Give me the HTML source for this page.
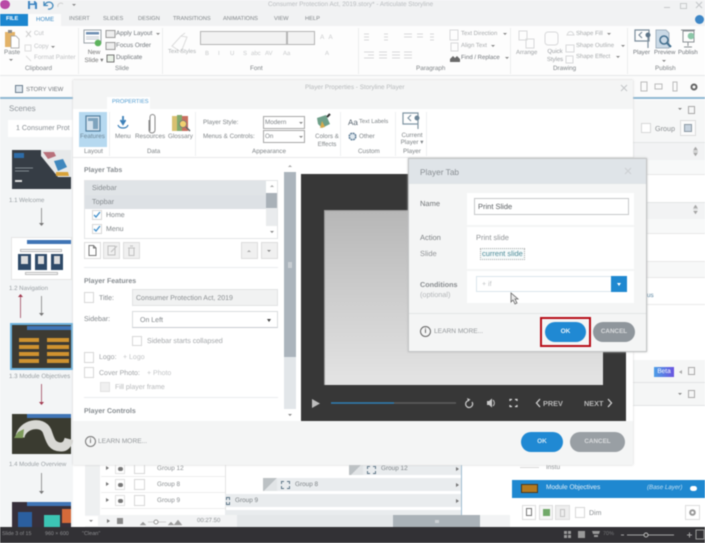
<!DOCTYPE html>
<html><head><meta charset="utf-8"><style>
html,body{margin:0;padding:0;width:705px;height:543px;overflow:hidden;background:#fff}
#r{position:relative;width:705px;height:543px;overflow:hidden;background:#fff;font-family:"Liberation Sans",sans-serif;color:#8b8f92;filter:blur(.5px);text-rendering:geometricPrecision}
#r div{position:absolute;box-sizing:border-box}
.t{white-space:nowrap;line-height:1}
.rb{font-size:6.300px}
.dk{color:#7f8487}
.lt{color:#a8abad}
svg{position:absolute;overflow:visible}
.cb{background:#fff;border:1px solid #d8d8d8}
.sq{background:#fafafa;border:1px solid #ddd}
.ar{width:0;height:0;border-left:3px solid #777;border-top:2px solid transparent;border-bottom:2px solid transparent}
.ad{width:0;height:0;border-top:2.500px solid #888;border-left:2px solid transparent;border-right:2px solid transparent}
.au{width:0;height:0;border-bottom:2.500px solid #aaa;border-left:2px solid transparent;border-right:2px solid transparent}
</style></head><body><div id="r">
<!-- top -->
<div style="left:0;top:0;width:705px;height:26px;background:#f1f2f3"></div>
<div style="left:0;top:0;width:10px;height:9px;border-radius:5px;background:#b94aa6"></div>
<svg style="left:27px;top:0" width="50" height="12" viewBox="0 0 50 12"><path d="M1 1h7l2 2v6H1z" fill="#3f86c2"/><rect x="3" y="1" width="4" height="2.500" fill="#e2ecf4"/><rect x="3" y="5" width="5" height="4" fill="#e2ecf4"/><path d="M18 5a4 3.500 0 1 1 3 4M17 1.500v4h4" fill="none" stroke="#4489bc" stroke-width="1.300"/><path d="M31 7a3 3 0 0 1 5-3" fill="none" stroke="#d0d0d0"/></svg>
<div class="ad" style="left:72px;top:4px"></div>
<div class="t" style="left:268px;top:2px;font-size:6.400px;color:#b9bcbf">Consumer Protection Act, 2019.story* - Articulate Storyline</div>
<div style="left:664px;top:7px;width:6px;height:1px;background:#c6c8ca"></div>
<div style="left:680px;top:3px;width:7px;height:6px;border:1px solid #c8cacc"></div>
<svg style="left:696px;top:2px" width="8" height="8" viewBox="0 0 8 8"><path d="M0 0l6 6M6 0L0 6" stroke="#c4c6c8"/></svg>
<div style="left:695px;top:15px;width:9px;height:9px;border-radius:5px;background:#3d86c6"></div>
<div style="left:0;top:14px;width:28px;height:12px;background:#1c86cf"></div>
<div class="t" style="left:6px;top:17px;font-size:5.700px;font-weight:bold;color:#fff">FILE</div>
<div style="left:28px;top:14px;width:33px;height:13px;background:#fcfcfc"></div>
<div class="t" style="left:36px;top:17px;font-size:6px;color:#3889c4">HOME</div>
<div class="t" style="left:69px;top:17px;font-size:5.700px;color:#7f8487">INSERT</div>
<div class="t" style="left:103px;top:17px;font-size:5.700px;color:#7f8487">SLIDES</div>
<div class="t" style="left:138px;top:17px;font-size:5.700px;color:#7f8487">DESIGN</div>
<div class="t" style="left:173px;top:17px;font-size:5.600px;color:#7f8487">TRANSITIONS</div>
<div class="t" style="left:223px;top:17px;font-size:5.700px;color:#7f8487">ANIMATIONS</div>
<div class="t" style="left:274px;top:17px;font-size:5.700px;color:#7f8487">VIEW</div>
<div class="t" style="left:305px;top:17px;font-size:5.700px;color:#7f8487">HELP</div>
<!-- ribbon -->
<div style="left:0;top:26px;width:705px;height:50px;background:#fdfdfd;border-bottom:1px solid #e6e8e9"></div>
<div style="left:78px;top:28px;width:1px;height:46px;background:#eceded"></div>
<div style="left:162px;top:28px;width:1px;height:46px;background:#eceded"></div>
<div style="left:510px;top:28px;width:1px;height:46px;background:#eceded"></div>
<div style="left:627px;top:28px;width:1px;height:46px;background:#eceded"></div>
<div style="left:358px;top:28px;width:1px;height:46px;background:#eceded"></div>
<svg style="left:0;top:26px" width="705" height="50" viewBox="0 0 705 50"><rect x="5" y="6" width="10" height="15" fill="#e3b368"/><rect x="8" y="4" width="4" height="3" fill="#8b8b8b"/><path d="M11 10h5l3 3v9h-8z" fill="#fff" stroke="#9a9a9a" stroke-width=".7"/>
<path d="M26 5l5 6M31 5l-5 6" stroke="#cfcfcf"/><rect x="25" y="19" width="6" height="6" fill="none" stroke="#ddd"/><path d="M26 30l5 5" stroke="#ddd"/>
<rect x="84" y="4" width="17" height="13" fill="#fff" stroke="#9aa2a8"/><rect x="86" y="6" width="13" height="2.500" fill="#6f8fb3"/><path d="M86 11h13M86 13h13" stroke="#c3cad0"/><circle cx="98" cy="17" r="3.300" fill="#5db35d"/>
<rect x="106" y="4.500" width="9" height="7" fill="#eee" stroke="#999"/><rect x="106" y="16.500" width="9" height="7" fill="#eee" stroke="#999"/><rect x="107" y="29" width="7" height="7" fill="#e9f1e6" stroke="#777"/>
<path d="M172 20l9-10 6 1-6 15zM181 10l4-3" fill="none" stroke="#dcdcdc"/>
<g fill="none" stroke="#d8d9da"><path d="M364 8h5M364 11h5M364 14h5M384 8h4M384 11h4M384 14h4M404 8h8M404 11h8M417 8h6M417 11h6M430 8h4M430 11h4M430 14h4M364 26h10M368 29h6M364 32h10M379 26h8M379 29h8M379 32h8M392 26h8M392 29h8M392 32h8M404 26h8M404 29h8M404 32h8"/><rect x="450" y="4" width="8" height="10"/><rect x="451" y="17" width="7" height="8"/><rect x="519" y="5" width="8" height="9"/><rect x="526" y="13" width="8" height="9"/><rect x="545" y="6" width="13" height="13" rx="3"/><path d="M568 7a3 3 0 0 1 5 0l1 2h-7z"/><rect x="566" y="19" width="8" height="7"/><rect x="566" y="30" width="7" height="7"/></g>
<path d="M450 33l3-3 2 2 2-2 3 3v3h-10z" fill="#6a6a6a"/>
<path d="M635 4h14v11h-14zM642 6l-3 3 3 3M648 10v12" fill="none" stroke="#7b8d9c" stroke-width="1.200"/><circle cx="648" cy="9" r="2.500" fill="#5c7488"/>
<path d="M656 4h10l3 3v15h-13z" fill="#cad9e6" stroke="#a4b3c0"/><circle cx="664" cy="14" r="4" fill="none" stroke="#44708f" stroke-width="1.500"/><path d="M667 17l4 4" stroke="#44708f" stroke-width="2"/>
<path d="M681 4h14M683 5h11v11h-11zM688 16v4M684 21h8" fill="none" stroke="#8c9195"/><circle cx="691" cy="10" r="3.300" fill="#8cc7a8"/></svg>
<div class="t rb" style="left:4px;top:50px;color:#7f8487">Paste</div>
<div class="ad" style="left:9px;top:59px"></div>
<div class="t rb" style="left:34px;top:31px;color:#c0c2c4">Cut</div>
<div class="t rb" style="left:34px;top:44px;color:#c0c2c4">Copy</div>
<div class="ad" style="left:51px;top:46px"></div>
<div class="t rb" style="left:34px;top:55px;color:#c0c2c4">Format Painter</div>
<div class="t rb dk" style="left:25px;top:66px">Clipboard</div>
<div class="t rb" style="left:82px;top:49px;width:24px;color:#777;text-align:center;line-height:7.500px">New<br>Slide ▾</div>
<div class="t rb" style="left:116px;top:31px;color:#70757a">Apply Layout</div>
<div class="ad" style="left:156px;top:33px"></div>
<div class="t rb" style="left:116px;top:43px;color:#70757a">Focus Order</div>
<div class="t rb" style="left:116px;top:55px;color:#70757a">Duplicate</div>
<div class="t rb dk" style="left:115px;top:66px">Slide</div>
<div class="t" style="left:168px;top:50px;font-size:5.800px;color:#aeb1b3">Text Styles</div>
<div style="left:200px;top:31px;width:87px;height:14px;background:#f2f2f2;border:1px solid #b5b5b5"></div>
<div style="left:287px;top:31px;width:28px;height:14px;background:#f2f2f2;border:1px solid #b5b5b5"></div>
<div class="t" style="left:205px;top:51px;font-size:6px;color:#c8cacb">B</div><div class="t" style="left:218px;top:51px;font-size:6px;color:#c8cacb">I</div><div class="t" style="left:230px;top:51px;font-size:6px;color:#c8cacb">U</div><div class="t" style="left:243px;top:51px;font-size:6px;color:#c8cacb">S</div><div class="t" style="left:251px;top:51px;font-size:6px;color:#c8cacb">abc</div><div class="t" style="left:265px;top:51px;font-size:6px;color:#c8cacb">AV</div><div class="t" style="left:283px;top:51px;font-size:6px;color:#c8cacb">Aa</div><div class="t" style="left:325px;top:51px;font-size:6px;color:#c8cacb">A</div>
<div class="t" style="left:320px;top:35px;font-size:6.500px;color:#cfd0d1;word-spacing:3px">A A</div>
<div class="t rb dk" style="left:250px;top:66px">Font</div>
<div class="t" style="left:461px;top:31px;font-size:6px;color:#a8abad">Text Direction</div>
<div class="t" style="left:461px;top:43px;font-size:6px;color:#a8abad">Align Text</div>
<div class="t" style="left:461px;top:55px;font-size:6px;color:#70757a">Find / Replace</div>
<div class="ad" style="left:503px;top:33px"></div><div class="ad" style="left:491px;top:45px"></div><div class="ad" style="left:505px;top:57px"></div>
<div class="t rb dk" style="left:416px;top:66px">Paragraph</div>
<div class="t" style="left:516px;top:50px;font-size:6px;color:#9b9ea1">Arrange</div>
<div class="t" style="left:543px;top:49px;width:24px;font-size:6px;color:#9b9ea1;text-align:center;line-height:7.500px">Quick<br>Styles</div>
<div class="t" style="left:576px;top:31px;font-size:6px;color:#a8abad">Shape Fill</div>
<div class="t" style="left:576px;top:43px;font-size:6px;color:#a8abad">Shape Outline</div>
<div class="t" style="left:576px;top:54px;font-size:6px;color:#a8abad">Shape Effect</div>
<div class="ad" style="left:607px;top:33px"></div><div class="ad" style="left:621px;top:45px"></div><div class="ad" style="left:616px;top:56px"></div>
<div class="t rb dk" style="left:553px;top:66px">Drawing</div>
<div class="t" style="left:633px;top:50px;font-size:6px;color:#70757a">Player</div>
<div class="t" style="left:654px;top:50px;font-size:6px;color:#70757a">Preview</div>
<div class="t" style="left:678px;top:50px;font-size:6px;color:#70757a">Publish</div>
<div class="ad" style="left:662px;top:60px"></div>
<div class="t rb dk" style="left:655px;top:66px">Publish</div>
<!-- story view row -->
<div style="left:0;top:76px;width:705px;height:23px;background:#fbfbfb"></div>
<div style="left:0;top:97px;width:73px;height:2px;background:#8fb7d2"></div>
<div style="left:633px;top:97px;width:72px;height:2px;background:#8fb7d2"></div>
<div style="left:15px;top:85px;width:8px;height:8px;border:1px solid #6d7f90;background:#dfe7ee"></div>
<div class="t" style="left:26px;top:87px;font-size:6px;color:#70757a">STORY VIEW</div>
<svg style="left:630px;top:80px" width="75" height="14" viewBox="0 0 75 14"><g fill="none" stroke="#bbb"><path d="M1 2v9"/><rect x="11" y="2" width="6" height="9"/><rect x="25" y="4" width="7" height="5"/><rect x="43" y="2" width="4" height="9"/></g><circle cx="64" cy="7" r="2.500" fill="none" stroke="#666" stroke-width="2"/></svg>
<!-- scenes panel -->
<div style="left:0;top:99px;width:73px;height:429px;background:#f3f5f6"></div>
<div class="t" style="left:9px;top:105px;font-size:8px;color:#8e9499">Scenes</div>
<div style="left:8px;top:120px;width:65px;height:17px;background:#fff"></div>
<div class="t" style="left:16px;top:125px;font-size:7.100px;color:#8a9095">1 Consumer Prot</div>
<!-- thumbs -->
<div style="left:12px;top:150px;width:59px;height:39px;background:#363d45;overflow:hidden"></div>
<div style="left:14px;top:153px;width:10px;height:5px;background:#2d6ca8"></div>
<svg style="left:12px;top:150px" width="59" height="39" viewBox="0 0 59 39"><path d="M29 0H59V27H46L29 6z" fill="#e7e9ea"/><path d="M42 11l9-2 4 8-9 4z" fill="#3f87bd"/><path d="M31 2h11l2 4-8 3z" fill="#b8707a"/><path d="M44 22l12 0 1 4-13 0z" fill="#d8a23a"/><path d="M3 18h18M3 21h14" stroke="#9aa1a8" stroke-width=".8"/><rect x="3" y="30" width="7" height="2" fill="#ddd"/></svg>
<div class="t" style="left:9px;top:198px;font-size:6.100px;color:#9aa0a4">1.1 Welcome</div>
<svg style="left:38px;top:208px" width="7" height="110" viewBox="0 0 7 110"><path d="M3.500 0v15M3.500 88v19" stroke="#999"/><path d="M1 15h5l-2.500 3zM1 105h5l-2.500 3z" fill="#777"/></svg>
<div style="left:11px;top:237px;width:61px;height:43px;background:#fff;border:1px solid #e6e6e6"></div>
<div style="left:27px;top:240px;width:44px;height:4px;background:#3f74b5"></div>
<div style="left:18px;top:254px;width:13px;height:16px;background:#2f4a68"></div><div style="left:21px;top:256px;width:7px;height:8px;background:#ddd"></div>
<div style="left:35px;top:254px;width:12px;height:16px;background:#2f4a68"></div><div style="left:38px;top:256px;width:6px;height:8px;background:#ddd"></div>
<div style="left:51px;top:254px;width:12px;height:16px;background:#2f4a68"></div><div style="left:54px;top:256px;width:6px;height:8px;background:#ddd"></div>
<div style="left:20px;top:249px;width:42px;height:3px;border:1px solid #bbb"></div>
<div style="left:25px;top:272px;width:33px;height:3px;border:1px solid #bbb"></div>
<div class="t" style="left:9px;top:286px;font-size:6.100px;color:#9aa0a4">1.2 Navigation</div>
<svg style="left:17px;top:294px" width="7" height="25" viewBox="0 0 7 25"><path d="M3.500 3v21" stroke="#b06a7c"/><path d="M1 3h5l-2.500-3z" fill="#a33a50"/></svg>
<div style="left:10px;top:323px;width:63px;height:47px;background:#3c3a33;border:2px solid #6db3de"></div>
<div style="left:27px;top:326px;width:44px;height:4px;background:#3f74b5"></div>
<div style="left:19px;top:338px;width:20px;height:4px;background:#cf9230"></div>
<div style="left:47px;top:338px;width:22px;height:4px;background:#cf9230"></div>
<div style="left:19px;top:345px;width:20px;height:4px;background:#cf9230"></div>
<div style="left:47px;top:345px;width:22px;height:4px;background:#cf9230"></div>
<div style="left:19px;top:352px;width:20px;height:4px;background:#cf9230"></div>
<div style="left:47px;top:352px;width:22px;height:4px;background:#cf9230"></div>
<div style="left:19px;top:359px;width:20px;height:4px;background:#cf9230"></div>
<div style="left:47px;top:359px;width:22px;height:4px;background:#cf9230"></div>
<div class="t" style="left:9px;top:374px;font-size:6.200px;color:#9aa0a4">1.3 Module Objectives</div>
<svg style="left:38px;top:384px" width="7" height="22" viewBox="0 0 7 22"><path d="M3.500 0v19" stroke="#b06a7c"/><path d="M1 18h5l-2.500 3z" fill="#a33a50"/></svg>
<div style="left:12px;top:414px;width:59px;height:40px;background:#3a3b30;overflow:hidden"></div>
<div style="left:27px;top:414px;width:44px;height:4px;background:#3f74b5"></div>
<svg style="left:12px;top:414px" width="59" height="40" viewBox="0 0 59 40"><path d="M8 23c2-13 22-17 27-6 3 8 4 16 14 16 5 0 7-4 8-8" fill="none" stroke="#d8d8d4" stroke-width="9"/><path d="M2 24l9 0 1-9-6 3z" fill="#7d9a5a"/></svg>
<div class="t" style="left:9px;top:462px;font-size:6.100px;color:#9aa0a4">1.4 Module Overview</div>
<svg style="left:38px;top:473px" width="7" height="22" viewBox="0 0 7 22"><path d="M3.500 0v19" stroke="#999"/><path d="M1 18h5l-2.500 3z" fill="#777"/></svg>
<div style="left:12px;top:502px;width:59px;height:26px;background:#37303a"></div>
<div style="left:27px;top:502px;width:44px;height:4px;background:#3f74b5"></div>
<div style="left:18px;top:512px;width:14px;height:16px;background:#2b5f9f"></div>
<div style="left:44px;top:515px;width:16px;height:13px;background:#3cc4b4"></div>
<div style="left:62px;top:509px;width:9px;height:14px;background:#d56a3a"></div>
<!-- right panel -->
<div style="left:633px;top:99px;width:72px;height:429px;background:#fff"></div>
<div style="left:633px;top:100px;width:72px;height:42px;background:#f6f7f7"></div>
<div style="left:633px;top:142px;width:72px;height:1px;background:#e3e5e6"></div>
<div class="ad" style="left:678px;top:108px"></div>
<div style="left:688px;top:106px;width:7px;height:8px;border:1px solid #a9a9a9"></div>
<div class="cb" style="left:641px;top:123px;width:10px;height:10px"></div>
<div class="t" style="left:655px;top:125px;font-size:7.200px;color:#8b8f92">Group</div>
<div style="left:680px;top:120px;width:16px;height:16px;background:#fbfbfb;border:1px solid #ddd"></div>
<div style="left:684px;top:124px;width:8px;height:8px;background:#c6d2de;border:1px solid #8d9aa5"></div>
<div style="left:633px;top:143px;width:72px;height:17px;background:#f2f3f4"></div>
<div style="left:633px;top:160px;width:72px;height:15px;background:#f8f9f9;border-bottom:1px solid #e8e8e8"></div>
<div style="left:633px;top:202px;width:72px;height:17px;background:#f2f3f4;border-top:1px solid #e3e5e6"></div>
<div style="left:633px;top:219px;width:72px;height:15px;background:#f8f9f9;border-bottom:1px solid #e8e8e8"></div>
<div style="left:633px;top:261px;width:72px;height:17px;background:#f7f8f8;border-top:1px solid #e8e8e8;border-bottom:1px solid #e8e8e8"></div>
<svg style="left:693px;top:147px" width="6" height="70" viewBox="0 0 6 70"><path d="M0 4h5M0 5h5M2.500 0l-2 3h4zM2.500 9l-2-3h4z" fill="#a5a5a5" stroke="#a5a5a5" stroke-width=".4"/><path d="M0 62h5M2.500 58l-2 3h4zM2.500 67l-2-3h4z" fill="#a5a5a5" stroke="#a5a5a5" stroke-width=".4"/></svg>
<div class="t" style="left:647px;top:293px;font-size:6.300px;color:#56829f">us</div>
<div style="left:633px;top:304px;width:72px;height:1px;background:#eaeaea"></div>
<div style="left:633px;top:360px;width:72px;height:23px;background:#f5f6f6;border-bottom:1px solid #e2e4e5"></div>
<div style="left:633px;top:383px;width:72px;height:23px;background:#f5f6f6;border-bottom:1px solid #e2e4e5"></div>
<div class="t" style="left:654px;top:367px;width:20px;height:10px;background:linear-gradient(90deg,#4c9ee6,#6a55e0);color:#fff;font-size:6.500px;text-align:center;line-height:10px">Beta</div>
<div style="left:679px;top:370px;width:0;height:0;border-right:3px solid #aaa;border-top:2px solid transparent;border-bottom:2px solid transparent"></div>
<div style="left:688px;top:367px;width:7px;height:8px;border:1px solid #a9a9a9"></div>
<div class="ad" style="left:678px;top:393px"></div>
<div style="left:688px;top:390px;width:7px;height:8px;border:1px solid #a9a9a9"></div>
<!-- bottom right -->
<div style="left:510px;top:465px;width:195px;height:63px;background:#fff"></div>
<div style="left:520px;top:467px;width:19px;height:1px;background:#d8d8d8"></div>
<div class="t" style="left:546px;top:465px;font-size:6.500px;color:#8b8f92">Instu</div>
<div style="left:512px;top:480px;width:193px;height:18px;background:#1f88d0"></div>
<div style="left:521px;top:484px;width:17px;height:9px;background:#b57a20;border:1px solid #4a3a20"></div>
<div class="t" style="left:546px;top:485px;font-size:6.600px;color:#e8f2f9">Module Objectives</div>
<div class="t" style="left:647px;top:485px;font-size:6.200px;font-style:italic;color:#c4e0f2">(Base Layer)</div>
<div style="left:690px;top:486px;width:7px;height:5px;border-radius:4px;background:#fff"></div>
<div style="left:522px;top:505px;width:14px;height:15px;background:#fff;border:1px solid #ddd"></div>
<div style="left:526px;top:508px;width:6px;height:8px;border:1px solid #777"></div>
<div style="left:539px;top:505px;width:14px;height:15px;background:#f5f5f5;border:1px solid #ddd"></div>
<div style="left:543px;top:509px;width:7px;height:7px;background:#70a868"></div>
<div style="left:555px;top:505px;width:15px;height:15px;background:#eee;border:1px solid #ddd"></div>
<div style="left:560px;top:509px;width:5px;height:8px;border:1px solid #c4c4c4"></div>
<div class="cb" style="left:575px;top:507px;width:10px;height:11px"></div>
<div class="t" style="left:589px;top:510px;font-size:7px;color:#8b8f92">Dim</div>
<div style="left:685px;top:505px;width:15px;height:15px;background:#fff;border:1px solid #ddd"></div>
<svg style="left:689px;top:509px" width="8" height="8" viewBox="0 0 8 8"><circle cx="3.500" cy="3.500" r="2.300" fill="none" stroke="#999" stroke-width="2"/></svg>
<!-- timeline -->
<div style="left:73px;top:465px;width:437px;height:63px;background:#fff"></div>
<div style="left:85px;top:465px;width:15px;height:63px;background:#eef0f1"></div>
<div style="left:225px;top:465px;width:1px;height:49px;background:#e4e4e4"></div>
<div style="left:101px;top:476px;width:124px;height:1px;background:#eee"></div><div style="left:101px;top:492px;width:124px;height:1px;background:#eee"></div><div style="left:101px;top:508px;width:124px;height:1px;background:#eee"></div>
<div class="ar" style="left:106px;top:466px"></div><div class="ar" style="left:106px;top:482px"></div><div class="ar" style="left:106px;top:498px"></div>
<div style="left:115px;top:463px;width:10px;height:11px;background:#fff;border:1px solid #e0e0e0"></div><div style="left:118px;top:467px;width:5px;height:4px;background:#777;border-radius:3px"></div>
<div style="left:115px;top:479px;width:10px;height:11px;background:#fff;border:1px solid #e0e0e0"></div><div style="left:118px;top:483px;width:5px;height:4px;background:#777;border-radius:3px"></div>
<div style="left:115px;top:495px;width:10px;height:11px;background:#fff;border:1px solid #e0e0e0"></div><div style="left:118px;top:499px;width:5px;height:4px;background:#777;border-radius:3px"></div>
<div class="cb" style="left:134px;top:463px;width:11px;height:11px"></div><div class="cb" style="left:134px;top:479px;width:11px;height:11px"></div><div class="cb" style="left:134px;top:495px;width:11px;height:11px"></div>
<div class="t" style="left:157px;top:466px;font-size:6.400px;color:#8b8f92">Group 12</div>
<div class="t" style="left:157px;top:482px;font-size:6.400px;color:#8b8f92">Group 8</div>
<div class="t" style="left:157px;top:498px;font-size:6.400px;color:#8b8f92">Group 9</div>
<div style="left:349px;top:465px;width:112px;height:10px;background:#e9ecee"></div><div style="left:349px;top:465px;width:14px;height:10px;background:linear-gradient(135deg,#bcc1c4 50%,#e1e4e6 50%)"></div>
<div style="left:263px;top:478px;width:198px;height:13px;background:#e9ecee"></div><div style="left:263px;top:478px;width:14px;height:13px;background:linear-gradient(135deg,#bcc1c4 50%,#e1e4e6 50%)"></div>
<div style="left:225px;top:494px;width:236px;height:13px;background:#e9ecee"></div>
<div style="left:225px;top:510px;width:236px;height:5px;background:#e9ecee"></div>
<div style="left:367px;top:466px;width:9px;height:8px;border:1px dashed #5f7688"></div>
<div class="t" style="left:381px;top:466px;font-size:6.400px;color:#7f8487">Group 12</div>
<div style="left:281px;top:481px;width:9px;height:8px;border:1px dashed #5f7688"></div>
<div class="t" style="left:295px;top:482px;font-size:6.400px;color:#7f8487">Group 8</div>
<div style="left:226px;top:497px;width:4px;height:8px;border:1px dashed #5f7688"></div>
<div class="t" style="left:235px;top:498px;font-size:6.400px;color:#7f8487">Group 9</div>
<div style="left:461px;top:465px;width:1px;height:50px;background:#9ebdd1"></div>
<div class="ar" style="left:456px;top:467px"></div><div class="ar" style="left:456px;top:483px"></div><div class="ar" style="left:456px;top:499px"></div>
<div style="left:85px;top:515px;width:425px;height:13px;background:#f2f3f4"></div>
<div style="left:85px;top:516px;width:13px;height:10px;background:#fff"></div>
<div class="ad" style="left:89px;top:520px"></div>
<div style="left:393px;top:515px;width:87px;height:12px;background:#aab2b8"></div>
<div style="left:237px;top:515px;width:156px;height:12px;background:#e4e7e9"></div>
<div style="left:435px;top:520px;width:4px;height:3px;background:#ccd0d3"></div>
<div class="ar" style="left:107px;top:519px"></div>
<div style="left:117px;top:518px;width:6px;height:6px;background:#888"></div>
<svg style="left:140px;top:517px" width="70" height="9" viewBox="0 0 70 9"><path d="M0 8l3-3 3 3zM8 5h18M28 8l3-3 3 3 4-5 4 5z" fill="#9a9a9a" stroke="#aaa" stroke-width=".5"/><circle cx="16" cy="5" r="2" fill="#fff" stroke="#999"/></svg>
<div class="t" style="left:197px;top:518px;font-size:6px;color:#8b8f92">00:27.50</div>
<!-- status -->
<div style="left:0;top:527px;width:705px;height:16px;background:#323135"></div>
<div class="t" style="left:2px;top:532px;font-size:5.300px;color:#8d8e90">Slide 3 of 15</div>
<div class="t" style="left:45px;top:532px;font-size:5.300px;color:#8d8e90">960 × 600</div>
<div class="t" style="left:82px;top:532px;font-size:5.500px;color:#8d8e90">"Clean"</div>
<svg style="left:563px;top:529px" width="142" height="13" viewBox="0 0 142 13"><g fill="#999"><rect x="1" y="2" width="3" height="3"/><rect x="5" y="2" width="3" height="3"/><rect x="1" y="6" width="3" height="3"/><rect x="5" y="6" width="3" height="3"/><rect x="15" y="2" width="7" height="7"/><path d="M29 2h8l-1 3h-6zM31 6h4v2h-4z"/></g><path d="M58 6h3M64 6h47M124 6h5M126.500 3.500v5" stroke="#a5a5a5"/><circle cx="83" cy="6" r="2" fill="#333" stroke="#bbb"/><rect x="133" y="1" width="8" height="9" fill="none" stroke="#999"/></svg>
<div class="t" style="left:603px;top:532px;font-size:5.500px;color:#77787a">70%</div>
<!-- Player Properties dialog -->
<div style="left:73px;top:80px;width:560px;height:385px;background:#f4f5f5;box-shadow:0 0 2px #ccc"></div>
<div class="t" style="left:305px;top:85px;font-size:6.400px;color:#b6b9bb">Player Properties - Storyline Player</div>
<svg style="left:621px;top:85px" width="8" height="8" viewBox="0 0 8 8"><path d="M0 0l6 6M6 0L0 6" stroke="#c4c6c8"/></svg>
<div style="left:107px;top:97px;width:43px;height:13px;background:#fff"></div>
<div class="t" style="left:112px;top:100px;font-size:5.700px;color:#4f9bd0">PROPERTIES</div>
<div style="left:73px;top:109px;width:560px;height:49px;background:#fff;border-bottom:1px solid #e8e9ea"></div>
<div style="left:79px;top:112px;width:28px;height:35px;background:#b6d9f0"></div>
<svg style="left:79px;top:112px" width="340" height="36" viewBox="0 0 340 36"><rect x="7" y="4" width="14" height="15" fill="#d5e3ee" stroke="#53809f" stroke-width="1.200"/><rect x="14" y="6" width="5" height="11" fill="#7ea3bd"/><rect x="9" y="6" width="5" height="3" fill="#7ea3bd"/>
<path d="M44 4v7M41.500 8l2.500 4 2.500-4" stroke="#3c80b8" stroke-width="1.800" fill="none"/><path d="M39 13c1 4 9 4 10 0" stroke="#3c80b8" stroke-width="1.300" fill="none"/>
<path d="M70 8v10a3 3 0 0 0 6 0V5a2.500 2.500 0 0 0-5 0v14" fill="none" stroke="#888" stroke-width="1"/>
<rect x="93" y="4" width="5" height="15" fill="#d8c070"/><rect x="98" y="3" width="5" height="16" fill="#82a96e"/><rect x="103" y="4" width="6" height="15" fill="#c87060"/><circle cx="104" cy="12" r="3.500" fill="#f0d070" stroke="#777" stroke-width=".8"/><path d="M107 15l4 4" stroke="#666" stroke-width="1.500"/>
<path d="M238 6l9-3 4 9-8 4-4-4z" fill="#6fa08a"/><path d="M243 9l-2 7 5-1z" fill="#d9a94a"/><path d="M248 5l3-3" stroke="#333" stroke-width="2"/></svg>
<div class="t rb" style="left:80px;top:134px;color:#6f8797">Features</div>
<div class="t rb dk" style="left:115px;top:134px">Menu</div>
<div class="t rb dk" style="left:135px;top:134px">Resources</div>
<div class="t rb dk" style="left:168px;top:134px">Glossary</div>
<div class="t rb dk" style="left:84px;top:149px">Layout</div>
<div class="t rb dk" style="left:147px;top:149px">Data</div>
<div class="t rb dk" style="left:203px;top:120px">Player Style:</div>
<div class="t rb dk" style="left:203px;top:134px">Menus &amp; Controls:</div>
<div style="left:263px;top:116px;width:42px;height:13px;background:#fff;border:1px solid #a8a8a8"></div>
<div class="t rb dk" style="left:265px;top:120px">Modern</div>
<div class="ad" style="left:299px;top:122px"></div>
<div style="left:263px;top:130px;width:42px;height:13px;background:#fff;border:1px solid #a8a8a8"></div>
<div class="t rb dk" style="left:265px;top:134px">On</div>
<div class="ad" style="left:299px;top:136px"></div>
<div class="t dk" style="left:311px;top:133px;width:32px;font-size:6.200px;line-height:7.500px;text-align:center;white-space:normal">Colors &amp; Effects</div>
<div class="t rb dk" style="left:252px;top:149px">Appearance</div>
<div class="t" style="left:348px;top:119px;font-size:8px;color:#53606b">Aa</div>
<div class="t dk" style="left:359px;top:120px;font-size:5.800px">Text Labels</div>
<svg style="left:348px;top:132px" width="10" height="10" viewBox="0 0 10 10"><circle cx="4.500" cy="4.500" r="3.300" fill="#dfe8ef" stroke="#5f7d96" stroke-width="1.500" stroke-dasharray="2 .6"/></svg>
<div class="t rb dk" style="left:359px;top:134px">Other</div>
<div class="t rb dk" style="left:358px;top:149px">Custom</div>
<svg style="left:402px;top:112px" width="19" height="19" viewBox="0 0 19 19"><path d="M1 1h15v11H1zM9 3l-3 3 3 3M16 8v9" fill="none" stroke="#8195a3" stroke-width="1.200"/><circle cx="15" cy="6" r="2.500" fill="#6d8597"/></svg>
<div class="t rb dk" style="left:398px;top:131.500px;width:28px;line-height:7.500px;text-align:center">Current<br>Player ▾</div>
<div class="t rb dk" style="left:403px;top:149px">Player</div>
<div style="left:195px;top:112px;width:1px;height:44px;background:#eef0f1"></div><div style="left:109px;top:112px;width:1px;height:44px;background:#eef0f1"></div><div style="left:340px;top:112px;width:1px;height:44px;background:#eef0f1"></div><div style="left:395px;top:112px;width:1px;height:44px;background:#eef0f1"></div><div style="left:426px;top:112px;width:1px;height:44px;background:#eef0f1"></div>
<!-- content -->
<div style="left:73px;top:158px;width:560px;height:263px;background:#fff"></div>
<div class="t" style="left:84px;top:168px;font-size:6.900px;font-weight:bold;color:#888d91">Player Tabs</div>
<div style="left:84px;top:180px;width:194px;height:59px;background:#fff;border:1px solid #e4e6e7"></div>
<div style="left:85px;top:181px;width:181px;height:14px;background:#e0e4e7"></div>
<div style="left:85px;top:195px;width:181px;height:14px;background:#dde1e5"></div>
<div class="t" style="left:92px;top:184px;font-size:7.200px;color:#878c90">Sidebar</div>
<div class="t" style="left:92px;top:198px;font-size:7.200px;color:#878c90">Topbar</div>
<div class="cb" style="left:92px;top:210px;width:10px;height:10px"></div>
<div class="cb" style="left:92px;top:224px;width:10px;height:10px"></div>
<svg style="left:92px;top:210px" width="10" height="24" viewBox="0 0 10 24"><path d="M2 5l2 2 4-5M2 19l2 2 4-5" fill="none" stroke="#3f8fcb" stroke-width="1.300"/></svg>
<div class="t" style="left:106px;top:212px;font-size:7px;color:#7f8487">Home</div>
<div class="t" style="left:106px;top:226px;font-size:7px;color:#7f8487">Menu</div>
<div style="left:266px;top:181px;width:11px;height:57px;background:#e9ebed"></div>
<div style="left:266px;top:181px;width:11px;height:12px;background:#fff"></div>
<div style="left:266px;top:193px;width:11px;height:15px;background:#a9b1b8"></div>
<div style="left:266px;top:226px;width:11px;height:12px;background:#fff"></div>
<div class="au" style="left:270px;top:185px"></div>
<div class="ad" style="left:270px;top:231px"></div>
<div class="sq" style="left:84px;top:242px;width:17px;height:17px;background:#fff"></div>
<div class="sq" style="left:103px;top:242px;width:17px;height:17px;background:#f0f0f0"></div>
<div class="sq" style="left:123px;top:242px;width:17px;height:17px;background:#f0f0f0"></div>
<svg style="left:84px;top:242px" width="56" height="17" viewBox="0 0 56 17"><path d="M5 3.500h4.500L12 6v7.500H5zM9.500 3.500V6H12" fill="none" stroke="#777"/><path d="M24 4h7v9h-7zM27 10l6-6" fill="none" stroke="#c0c0c0"/><path d="M44 6h7M45 6v7.500h5V6M46 4h3" fill="none" stroke="#c0c0c0"/></svg>
<div class="sq" style="left:241px;top:242px;width:17px;height:17px;background:#f0f0f0"></div>
<div class="au" style="left:247px;top:250px"></div>
<div class="sq" style="left:261px;top:242px;width:17px;height:17px;background:#f0f0f0"></div>
<div class="ad" style="left:267px;top:250px"></div>
<div style="left:84px;top:267px;width:194px;height:1px;background:#ebedee"></div>
<div class="t" style="left:84px;top:278px;font-size:7px;font-weight:bold;color:#888d91">Player Features</div>
<div class="cb" style="left:84px;top:292px;width:10px;height:11px"></div>
<div class="t" style="left:99px;top:295px;font-size:7px;color:#808589">Title:</div>
<div style="left:132px;top:289px;width:146px;height:17px;background:#f1f2f2;border:1px solid #e2e3e4"></div>
<div class="t" style="left:136px;top:295px;font-size:7px;color:#8a8e91">Consumer Protection Act, 2019</div>
<div class="t" style="left:84px;top:316px;font-size:7px;color:#808589">Sidebar:</div>
<div style="left:132px;top:311px;width:146px;height:17px;background:#fff;border:1px solid #dadcde;border-bottom-color:#c8ccd0"></div>
<div class="t" style="left:140px;top:317px;font-size:7px;color:#808589">On Left</div>
<div style="left:267px;top:319px;width:0;height:0;border-top:3px solid #444;border-left:2.500px solid transparent;border-right:2.500px solid transparent"></div>
<div class="cb" style="left:132px;top:336px;width:10px;height:10px"></div>
<div class="t" style="left:147px;top:338px;font-size:7.100px;color:#a3a6a9">Sidebar starts collapsed</div>
<div class="cb" style="left:84px;top:352px;width:10px;height:11px"></div>
<div class="t" style="left:99px;top:354px;font-size:7px;color:#a0a3a6">Logo:</div>
<div class="t" style="left:123px;top:354px;font-size:7px;color:#c3c5c7">+ Logo</div>
<div class="cb" style="left:84px;top:367px;width:10px;height:11px"></div>
<div class="t" style="left:99px;top:370px;font-size:7px;color:#a0a3a6">Cover Photo:</div>
<div class="t" style="left:147px;top:370px;font-size:7px;color:#c3c5c7">+ Photo</div>
<div style="left:100px;top:382px;width:10px;height:10px;background:#f0f0f0;border:1px solid #e2e2e2"></div>
<div class="t" style="left:115px;top:384px;font-size:7px;color:#b6b8ba">Fill player frame</div>
<div style="left:84px;top:397px;width:194px;height:1px;background:#ebedee"></div>
<div class="t" style="left:84px;top:408px;font-size:7px;font-weight:bold;color:#888d91">Player Controls</div>
<!-- scrollbar -->
<div style="left:284px;top:160px;width:12px;height:261px;background:#e2e6e9"></div>
<div style="left:284px;top:160px;width:12px;height:12px;background:#fff"></div>
<div style="left:284px;top:172px;width:12px;height:185px;background:#abb4bc"></div>
<div style="left:284px;top:409px;width:12px;height:12px;background:#fff"></div>
<div class="au" style="left:288px;top:165px"></div>
<div class="ad" style="left:288px;top:414px"></div>
<div style="left:288px;top:262px;width:4px;height:6px;background:#c7cdd2"></div>
<!-- preview -->
<div style="left:301px;top:174px;width:325px;height:247px;background:#373737"></div>
<div style="left:324px;top:210px;width:279px;height:175px;background:linear-gradient(#b7b7b7,#e2e2e2 95%);border:1px solid #999;border-width:1px 0 0 1px"></div>
<svg style="left:301px;top:390px" width="325" height="25" viewBox="0 0 325 25"><path d="M11 9l8 4.500-8 4.500z" fill="#bdbdbd"/><path d="M30 13h63" stroke="#2f7fb6" stroke-width="1.500"/><path d="M93 13h62" stroke="#5e5e5e" stroke-width="1.500"/><path d="M168 10.500a3.500 3.500 0 1 0 3 1.500" fill="none" stroke="#c8c8c8" stroke-width="1.300"/><path d="M166 8l3.500 1.500-2.500 2z" fill="#c8c8c8"/><path d="M186 11h2l3-2.500v9l-3-2.500h-2z" fill="#c8c8c8"/><path d="M192 10a4 4 0 0 1 0 6" fill="none" stroke="#c8c8c8" stroke-width="1"/><path d="M209 11V9.500h2M214 9.500h2V11M216 15v1.500h-2M211 16.500h-2V15" fill="none" stroke="#ddd" stroke-width="1.200"/><path d="M239 9l-3.500 4 3.500 4M307 9l3.500 4-3.500 4" fill="none" stroke="#cfcfcf" stroke-width="1.300"/></svg>
<div class="t" style="left:543px;top:400px;font-size:7.300px;font-weight:bold;color:#b8b8b8">PREV</div>
<div class="t" style="left:584px;top:400px;font-size:7.300px;font-weight:bold;color:#b8b8b8">NEXT</div>
<!-- footer -->
<div style="left:85px;top:436px;width:11px;height:11px;border:1px solid #777;border-radius:50%"></div>
<div class="t" style="left:89.500px;top:438px;font-size:7px;font-weight:bold;color:#777">i</div>
<div class="t" style="left:98px;top:439px;font-size:6.600px;color:#93979a">LEARN MORE...</div>
<div style="left:521px;top:432px;width:42px;height:20px;border-radius:10px;background:#2089d3"></div>
<div class="t" style="left:521px;top:439px;width:42px;text-align:center;font-size:6.500px;font-weight:bold;color:#cfe6f5">OK</div>
<div style="left:570px;top:432px;width:55px;height:20px;border-radius:10px;background:#999fa4"></div>
<div class="t" style="left:570px;top:439px;width:55px;text-align:center;font-size:6.300px;font-weight:bold;color:#d8dadc">CANCEL</div>
<!-- Player tab dialog -->
<div style="left:408px;top:158px;width:239px;height:194px;background:#f4f5f5;border:1px solid #c3c5c6;box-shadow:0 0 2px #bbb"></div>
<div style="left:409px;top:159px;width:237px;height:25px;background:#dfe4e8"></div>
<div class="t" style="left:420px;top:167.500px;font-size:8.300px;color:#8a8f94">Player Tab</div>
<svg style="left:625px;top:168px" width="8" height="8" viewBox="0 0 8 8"><path d="M0 0l6 6M6 0L0 6" stroke="#cdd1d4" stroke-width="1.200"/></svg>
<div style="left:467px;top:193px;width:167px;height:32px;background:#fff"></div>
<div style="left:467px;top:227px;width:167px;height:42px;background:#fff"></div>
<div style="left:467px;top:271px;width:167px;height:32px;background:#fff"></div>
<div style="left:409px;top:313px;width:237px;height:1px;background:#e3e5e6"></div>
<div class="t" style="left:420px;top:200px;font-size:7.500px;color:#6f7376">Name</div>
<div style="left:474px;top:198px;width:155px;height:17px;background:#fff;border:1px solid #c7c9ca"></div>
<div class="t" style="left:478px;top:203px;font-size:7.500px;color:#5c6063">Print Slide</div>
<div class="t" style="left:420px;top:234px;font-size:7.500px;color:#7b7f82">Action</div>
<div class="t" style="left:476px;top:234px;font-size:7.500px;color:#909396">Print slide</div>
<div class="t" style="left:420px;top:250px;font-size:7.500px;color:#909396">Slide</div>
<div style="left:480px;top:248px;width:45px;height:12px;background:#f6fafa;border:1px dotted #aaa"></div>
<div class="t" style="left:482px;top:250px;font-size:7.500px;color:#4d8c99">current slide</div>
<div class="t" style="left:420px;top:281px;font-size:7.200px;font-weight:bold;color:#888c8f">Conditions</div>
<div class="t" style="left:420px;top:291px;font-size:7.300px;color:#b3b6b8">(optional)</div>
<div style="left:476px;top:276px;width:151px;height:16px;background:#fff;border:1px solid #dbe6ec"></div>
<div class="t" style="left:482px;top:281px;font-size:7px;color:#c0c3c5">+ if</div>
<div style="left:611px;top:276px;width:16px;height:16px;background:#1f88d0"></div>
<div style="left:617px;top:283px;width:0;height:0;border-top:3px solid #fff;border-left:2.500px solid transparent;border-right:2.500px solid transparent"></div>
<svg style="left:510px;top:292px" width="9" height="13" viewBox="0 0 9 13"><path d="M1 1v9l2-2 2 4 2-1-2-4h3z" fill="#e8e8e8" stroke="#666" stroke-width=".8"/></svg>
<div style="left:420px;top:326px;width:11px;height:11px;border:1px solid #666;border-radius:50%"></div>
<div class="t" style="left:424.500px;top:328px;font-size:7px;font-weight:bold;color:#666">i</div>
<div class="t" style="left:434px;top:329px;font-size:6.600px;color:#93979a">LEARN MORE...</div>
<div style="left:540px;top:317px;width:51px;height:30px;border:2px solid #b70e19"></div>
<div style="left:545px;top:322px;width:41px;height:20px;border-radius:10px;background:#2089d3"></div>
<div class="t" style="left:545px;top:329px;width:41px;text-align:center;font-size:6.500px;font-weight:bold;color:#e6f2fa">OK</div>
<div style="left:593px;top:322px;width:42px;height:20px;border-radius:10px;background:#8f969c"></div>
<div class="t" style="left:593px;top:329px;width:42px;text-align:center;font-size:6.300px;font-weight:bold;color:#d8dadc">CANCEL</div>
</div></body></html>
